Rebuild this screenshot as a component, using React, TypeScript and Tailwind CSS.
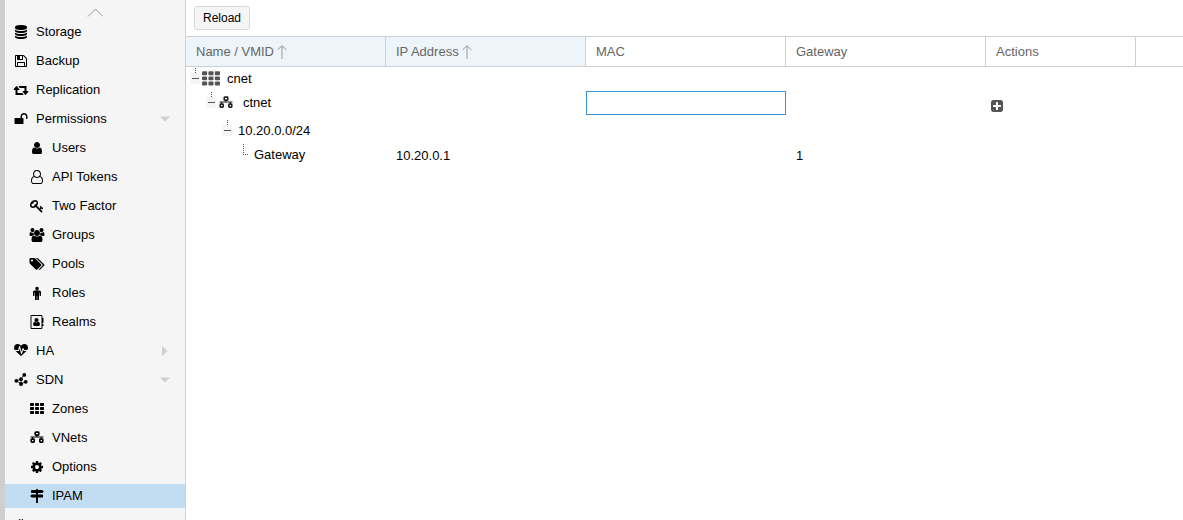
import clsx from 'clsx'

const ICONS = {
  database: {
    box: '0 0 1792 1792',
    d: 'M896 768q237 0 443-43t325-127v170q0 69-103 128t-280 93.5-385 34.5-385-34.5-280-93.5-103-128v-170q119 84 325 127t443 43zm0 768q237 0 443-43t325-127v170q0 69-103 128t-280 93.5-385 34.5-385-34.5-280-93.5-103-128v-170q119 84 325 127t443 43zm0-384q237 0 443-43t325-127v170q0 69-103 128t-280 93.5-385 34.5-385-34.5-280-93.5-103-128v-170q119 84 325 127t443 43zm0-1152q208 0 385 34.5t280 93.5 103 128v128q0 69-103 128t-280 93.5-385 34.5-385-34.5-280-93.5-103-128v-128q0-69 103-128t280-93.5 385-34.5z',
  },
  floppy: {
    box: '0 0 1792 1792',
    d: 'M512 1536h768v-384h-768v384zm896 0h128v-896q0-14-10-38.5t-20-34.5l-281-281q-10-10-34-20t-39-10v416q0 40-28 68t-68 28h-576q-40 0-68-28t-28-68v-416h-128v1280h128v-416q0-40 28-68t68-28h832q40 0 68 28t28 68v416zm-384-928v-320q0-13-9.5-22.5t-22.5-9.5h-192q-13 0-22.5 9.5t-9.5 22.5v320q0 13 9.5 22.5t22.5 9.5h192q13 0 22.5-9.5t9.5-22.5zm640 32v928q0 40-28 68t-68 28h-1344q-40 0-68-28t-28-68v-1344q0-40 28-68t68-28h928q40 0 88 20t76 48l280 280q28 28 48 76t20 88z',
  },
  retweet: {
    box: '64 0 1920 1792',
    d: 'M1344 1504q0 13-9.5 22.5t-22.5 9.5h-960q-8 0-13.5-2t-9-7-5.5-8-3-11.5-1-11.5v-600h-192q-26 0-45-19t-19-45q0-24 15-41l320-384q19-22 49-22t49 22l320 384q15 17 15 41 0 26-19 45t-45 19h-192v384h576q16 0 25 11l160 192q7 10 7 21zm640-416q0 24-15 41l-320 384q-20 23-49 23t-49-23l-320-384q-15-17-15-41 0-26 19-45t45-19h192v-384h-576q-16 0-25-12l-160-192q-7-9-7-20 0-13 9.5-22.5t22.5-9.5h960q8 0 13.5 2t9 7 5.5 8 3 11.5 1 11.5v600h192q26 0 45 19t19 45z',
  },
  unlock: {
    box: '0 0 1792 1792',
    d: 'M1728 576v256q0 26-19 45t-45 19h-64q-26 0-45-19t-19-45v-256q0-106-75-181t-181-75-181 75-75 181v192h96q40 0 68 28t28 68v576q0 40-28 68t-68 28h-960q-40 0-68-28t-28-68v-576q0-40 28-68t68-28h672v-192q0-185 131.5-316.5t316.5-131.5 316.5 131.5 131.5 316.5z',
  },
  user: {
    box: '0 0 1792 1792',
    d: 'M1536 1399q0 109-62.5 187t-150.5 78h-854q-88 0-150.5-78t-62.5-187q0-85 8.5-160.5t31.5-152 58.5-131 94-89 134.5-34.5q131 128 313 128t313-128q76 0 134.5 34.5t94 89 58.5 131 31.5 152 8.5 160.5zm-256-887q0 159-112.5 271.5t-271.5 112.5-271.5-112.5-112.5-271.5 112.5-271.5 271.5-112.5 271.5 112.5 112.5 271.5z',
  },
  userOutline: {
    box: '0 0 1792 1792',
    d: 'M1329 784q47 14 89.5 38t89 73 79.5 115.5 55 172 22 236.5q0 154-100 263.5t-241 109.5h-854q-141 0-241-109.5t-100-263.5q0-131 22-236.5t55-172 79.5-115.5 89-73 89.5-38q-79-125-79-272 0-104 40.5-198.5t109.5-163.5 163.5-109.5 198.5-40.5 198.5 40.5 163.5 109.5 109.5 163.5 40.5 198.5q0 147-79 272zm-433-656q-159 0-271.5 112.5t-112.5 271.5 112.5 271.5 271.5 112.5 271.5-112.5 112.5-271.5-112.5-271.5-271.5-112.5zm427 1536q88 0 150.5-71.5t62.5-173.5q0-239-78.5-377t-225.5-145q-145 127-336 127t-336-127q-147 7-225.5 145t-78.5 377q0 102 62.5 173.5t150.5 71.5h854z',
  },
  key: {
    box: '0 0 1792 1792',
    d: 'M832 512q0-80-56-136t-136-56-136 56-56 136q0 42 19 83-41-19-83-19-80 0-136 56t-56 136 56 136 136 56 136-56 56-136q0-42-19-83 41 19 83 19 80 0 136-56t56-136zm851 704q0 17-49 66t-66 49q-9 0-28.5-16t-36.5-33-38.5-40-24.5-26l-96 96 220 220q28 28 28 68 0 42-39 81t-81 39q-40 0-68-28l-671-671q-176 131-365 131-163 0-265.5-102.5t-102.5-265.5q0-160 95-313t248-248 313-95q163 0 265.5 102.5t102.5 265.5q0 189-131 365l355 355 96-96q-3-3-26-24.5t-40-38.5-33-36.5-16-28.5q0-17 49-66t66-49q13 0 23 10 6 6 46 44.5t82 79.5 86.5 86 73 78 28.5 41z',
  },
  users: {
    box: '-64 0 1920 1792',
    d: 'M529 896q-162 5-265 128h-134q-82 0-138-40.5t-56-118.5q0-353 124-353 6 0 43.5 21t97.5 42.5 119 21.5q67 0 133-23-5 37-5 66 0 139 81 256zm1071 637q0 120-73 189.5t-194 69.5h-874q-121 0-194-69.5t-73-189.5q0-53 3.5-103.5t14-109 26.5-108.5 43-97.5 62-81 85.5-53.5 111.5-20q10 0 43 21.5t73 48 107 48 135 21.5 135-21.5 107-48 73-48 43-21.5q61 0 111.5 20t85.5 53.5 62 81 43 97.5 26.5 108.5 14 109 3.5 103.5zm-1024-1277q0 106-75 181t-181 75-181-75-75-181 75-181 181-75 181 75 75 181zm704 384q0 159-112.5 271.5t-271.5 112.5-271.5-112.5-112.5-271.5 112.5-271.5 271.5-112.5 271.5 112.5 112.5 271.5zm576 225q0 78-56 118.5t-138 40.5h-134q-103-123-265-128 81-117 81-256 0-29-5-66 66 23 133 23 59 0 119-21.5t97.5-42.5 43.5-21q124 0 124 353zm-128-609q0 106-75 181t-181 75-181-75-75-181 75-181 181-75 181 75 75 181z',
  },
  tags: {
    box: '128 0 1920 1792',
    d: 'M576 448q0-53-37.5-90.5t-90.5-37.5-90.5 37.5-37.5 90.5 37.5 90.5 90.5 37.5 90.5-37.5 37.5-90.5zm1067 576q0 53-37 90l-491 492q-39 37-91 37-53 0-90-37l-715-716q-38-37-64.5-101t-26.5-117v-416q0-52 38-90t90-38h416q53 0 117 26.5t102 64.5l715 714q37 39 37 91zm384 0q0 53-37 90l-491 492q-39 37-91 37-36 0-59-14t-53-45l470-470q37-37 37-90 0-52-37-91l-715-714q-38-38-102-64.5t-117-26.5h224q53 0 117 26.5t102 64.5l715 714q37 39 37 91z',
  },
  male: {
    box: '0 0 1792 1792',
    d: 'M1408 768v416q0 40-28 68t-68 28-68-28-28-68v-352h-64v912q0 46-33 79t-79 33-79-33-33-79v-464h-64v464q0 46-33 79t-79 33-79-33-33-79v-912h-64v352q0 40-28 68t-68 28-68-28-28-68v-416q0-80 56-136t136-56h640q80 0 136 56t56 136zm-288-448q0 93-65.5 158.5t-158.5 65.5-158.5-65.5-65.5-158.5 65.5-158.5 158.5-65.5 158.5 65.5 65.5 158.5z',
  },
  addressBook: {
    box: '0 0 1792 1792',
    d: 'M1092 644q0 107-76.5 183t-183.5 76-183.5-76-76.5-183q0-108 76.5-184t183.5-76 183.5 76 76.5 184zm-48 220q46 0 82.5 17t60 47.5 39.5 67 24 81 11.5 82.5 3.5 79q0 67-39.5 118.5t-105.5 51.5h-576q-66 0-105.5-51.5t-39.5-118.5q0-48 4.5-93.5t18.5-98.5 36.5-91.5 63-64.5 93.5-26h5q7 4 32 19.5t35.5 21 33 17 37 16 35 9 39.5 4.5 39.5-4.5 35-9 37-16 33-17 35.5-21 32-19.5zm684-256q0 13-9.5 22.5t-22.5 9.5h-96v128h96q13 0 22.5 9.5t9.5 22.5v192q0 13-9.5 22.5t-22.5 9.5h-96v128h96q13 0 22.5 9.5t9.5 22.5v192q0 13-9.5 22.5t-22.5 9.5h-96v224q0 66-47 113t-113 47h-1216q-66 0-113-47t-47-113v-1472q0-66 47-113t113-47h1216q66 0 113 47t47 113v224h96q13 0 22.5 9.5t9.5 22.5v192q0 13-9.5 22.5t-22.5 9.5h-96v128h96q13 0 22.5 9.5t9.5 22.5v192zm-256 1024v-1472q0-13-9.5-22.5t-22.5-9.5h-1216q-13 0-22.5 9.5t-9.5 22.5v1472q0 13 9.5 22.5t22.5 9.5h1216q13 0 22.5-9.5t9.5-22.5z',
  },
  heartbeat: {
    box: '0 0 1792 1792',
    d: 'M1280 896h305q-5 6-10 10.5t-9 7.5l-3 4-623 600q-18 18-44 18t-44-18l-624-602q-5-2-21-20h369q22 0 39.5-13.5t22.5-34.5l70-281 190 667q6 20 23 33t39 13q21 0 38-13t23-33l146-485 56 112q18 35 57 35zm512-428q0 145-103 300h-369l-111-221q-8-17-25.5-27t-36.5-8q-45 5-56 46l-129 430-196-686q-6-20-23.5-33t-39.5-13-39 13.5-22 34.5l-116 464h-423q-103-155-103-300 0-220 127-344t351-124q62 0 126.5 21.5t120 58 95.5 68.5 76 68q36-36 76-68t95.5-68.5 120-58 126.5-21.5q224 0 351 124t127 344z',
  },
  th: {
    box: '0 0 1792 1792',
    d: 'M96 128h320q96 0 96 96v192q0 96-96 96h-320q-96 0-96-96v-192q0-96 96-96zm640 0h320q96 0 96 96v192q0 96-96 96h-320q-96 0-96-96v-192q0-96 96-96zm640 0h320q96 0 96 96v192q0 96-96 96h-320q-96 0-96-96v-192q0-96 96-96zm-1280 512h320q96 0 96 96v192q0 96-96 96h-320q-96 0-96-96v-192q0-96 96-96zm640 0h320q96 0 96 96v192q0 96-96 96h-320q-96 0-96-96v-192q0-96 96-96zm640 0h320q96 0 96 96v192q0 96-96 96h-320q-96 0-96-96v-192q0-96 96-96zm-1280 512h320q96 0 96 96v192q0 96-96 96h-320q-96 0-96-96v-192q0-96 96-96zm640 0h320q96 0 96 96v192q0 96-96 96h-320q-96 0-96-96v-192q0-96 96-96zm640 0h320q96 0 96 96v192q0 96-96 96h-320q-96 0-96-96v-192q0-96 96-96z',
  },
  cog: {
    box: '0 0 1792 1792',
    d: 'M1152 896q0-106-75-181t-181-75-181 75-75 181 75 181 181 75 181-75 75-181zm512-109v222q0 12-8 23t-20 13l-185 28q-19 54-39 91 35 50 107 138 10 12 10 25t-9 23q-27 37-99 108t-94 71q-12 0-26-9l-138-108q-44 23-91 38-16 136-29 186-7 28-36 28h-222q-14 0-24.5-8.5t-11.5-21.5l-28-184q-49-16-90-37l-141 107q-10 9-25 9-14 0-25-11-126-114-165-168-7-10-7-23 0-12 8-23 15-21 51-66.5t54-70.5q-27-50-41-99l-183-27q-13-2-21-12.5t-8-23.5v-222q0-12 8-23t19-13l186-28q14-46 39-92-40-57-107-138-10-12-10-24 0-10 9-23 26-36 98.5-107.5t94.5-71.5q13 0 26 10l138 107q44-23 91-38 16-136 29-186 7-28 36-28h222q14 0 24.5 8.5t11.5 21.5l28 184q49 16 90 37l142-107q9-9 24-9 13 0 25 10 129 119 165 170 7 8 7 22 0 12-8 23-15 21-51 66.5t-54 70.5q26 50 41 98l183 28q13 2 21 12.5t8 23.5z',
  },
  mapSigns: {
    box: '0 0 1792 1792',
    d: 'M1745 297q10 10 10 23t-10 23l-141 141q-28 28-68 28h-1344q-26 0-45-19t-19-45v-256q0-26 19-45t45-19h576v-64q0-26 19-45t45-19h128q26 0 45 19t19 45v64h512q40 0 68 28zm-977 791h256v640q0 26-19 45t-45 19h-128q-26 0-45-19t-19-45v-640zm832-384q26 0 45 19t19 45v256q0 26-19 45t-45 19h-1344q-40 0-68-28l-141-141q-10-10-10-23t10-23l141-141q28-28 68-28h512v-192h256v192h576z',
  },
  certificate: {
    box: '0 0 1792 1792',
    d: 'M1504 896l138 135q30 28 20 70-12 41-52 51l-188 48 53 186q12 41-19 70-29 31-70 19l-186-53-48 188q-10 40-51 52-12 2-19 2-31 0-51-22l-135-138-135 138q-28 30-70 20-41-11-51-52l-48-188-186 53q-41 12-70-19-31-29-19-70l53-186-188-48q-40-10-52-51-10-42 20-70l138-135-138-135q-30-28-20-70 12-41 52-51l188-48-53-186q-12-41 19-70 29-31 70-19l186 53 48-188q10-41 51-51 41-12 70 19l135 139 135-139q29-30 70-19 41 10 51 51l48 188 186-53q41-12 70 19 31 29 19 70l-53 186 188 48q40 10 52 51 10 42-20 70z',
  },
  plusSquare: {
    box: '0 0 1792 1792',
    d: 'M1408 960v-128q0-26-19-45t-45-19h-320v-320q0-26-19-45t-45-19h-128q-26 0-45 19t-19 45v320h-320q-26 0-45 19t-19 45v128q0 26 19 45t45 19h320v320q0 26 19 45t45 19h128q26 0 45-19t19-45v-320h320q26 0 45-19t19-45zm256-544v960q0 119-84.5 203.5t-203.5 84.5h-960q-119 0-203.5-84.5t-84.5-203.5v-960q0-119 84.5-203.5t203.5-84.5h960q119 0 203.5 84.5t84.5 203.5z',
  },
}

type IconName = keyof typeof ICONS | 'network' | 'sdn'

function Icon({ name, className = 'h-3.5 w-4' }: { name: IconName; className?: string }) {
  if (name === 'network') {
    return (
      <svg viewBox="0 0 14 14" className={clsx('shrink-0', className)} fill="none" stroke="currentColor" aria-hidden="true">
        <rect x="5.2" y="1.1" width="3.6" height="3" rx="0.6" strokeWidth="1.6" />
        <rect x="1.2" y="8.1" width="3" height="3" rx="0.6" strokeWidth="1.6" />
        <rect x="9.8" y="8.1" width="3" height="3" rx="0.6" strokeWidth="1.6" />
        <path d="M7 4v2.500M0.500 6h13M2.700 6v2M11.300 6v2" strokeWidth="1.1" />
      </svg>
    )
  }
  if (name === 'sdn') {
    return (
      <svg viewBox="0 0 14 14" className={clsx('shrink-0', className)} fill="currentColor" stroke="currentColor" aria-hidden="true">
        <path d="M2.300 7.800L7 10.800L11.700 8.800M2.300 7.800L7 6.200L10.300 1.800M7 6.200v4.600" fill="none" strokeWidth="0.8" />
        <g stroke="none">
          <circle cx="2.3" cy="7.8" r="1.9" />
          <circle cx="10.3" cy="1.9" r="1.9" />
          <circle cx="7" cy="6.2" r="1.9" />
          <circle cx="7" cy="10.9" r="2" />
          <circle cx="11.7" cy="8.8" r="1.9" />
        </g>
      </svg>
    )
  }
  const icon = ICONS[name]
  return (
    <svg viewBox={icon.box} className={clsx('shrink-0', className)} fill="currentColor" aria-hidden="true">
      <path d={icon.d} />
    </svg>
  )
}

type NavItem = {
  label: string
  icon: IconName
  child?: boolean
  state?: 'open' | 'closed'
  selected?: boolean
}

const NAV: NavItem[] = [
  { label: 'Storage', icon: 'database' },
  { label: 'Backup', icon: 'floppy' },
  { label: 'Replication', icon: 'retweet' },
  { label: 'Permissions', icon: 'unlock', state: 'open' },
  { label: 'Users', icon: 'user', child: true },
  { label: 'API Tokens', icon: 'userOutline', child: true },
  { label: 'Two Factor', icon: 'key', child: true },
  { label: 'Groups', icon: 'users', child: true },
  { label: 'Pools', icon: 'tags', child: true },
  { label: 'Roles', icon: 'male', child: true },
  { label: 'Realms', icon: 'addressBook', child: true },
  { label: 'HA', icon: 'heartbeat', state: 'closed' },
  { label: 'SDN', icon: 'sdn', state: 'open' },
  { label: 'Zones', icon: 'th', child: true },
  { label: 'VNets', icon: 'network', child: true },
  { label: 'Options', icon: 'cog', child: true },
  { label: 'IPAM', icon: 'mapSigns', child: true, selected: true },
  { label: '', icon: 'certificate' },
]

function Sidebar() {
  return (
    <nav className="flex w-[186px] shrink-0 flex-col overflow-hidden border-r border-l-5 border-[#cfcfcf] bg-[#f5f5f5]">
      <button type="button" aria-label="Scroll up" className="flex h-5 shrink-0 items-center justify-center pt-1">
        <svg viewBox="0 0 16 9" className="h-[9px] w-4" fill="none" stroke="#999" aria-hidden="true">
          <path d="M1 8.500L8.500 1L16 8.500" />
        </svg>
      </button>
      <ul className="flex flex-col gap-[5px]">
        {NAV.map((item) => (
          <li key={item.icon}>
            <a
              href="#"
              className={clsx(
                'flex h-6 items-center gap-[7px] pr-[15px]',
                item.child ? 'pl-6' : 'pl-2',
                item.selected && 'bg-[#c2ddf2]',
              )}
            >
              <Icon name={item.icon} />
              <span className="flex-1">{item.label}</span>
              {item.state && (
                <svg viewBox="0 0 10 10" className="size-2.5" fill="#cfcfcf" aria-hidden="true">
                  <path d={item.state === 'open' ? 'M0 2.500h10l-5 5z' : 'M2 0v10l5.500-5z'} />
                </svg>
              )}
            </a>
          </li>
        ))}
      </ul>
    </nav>
  )
}

const COLUMNS = [
  { label: 'Name / VMID', sorted: true },
  { label: 'IP Address', sorted: true },
  { label: 'MAC' },
  { label: 'Gateway' },
  { label: 'Actions' },
]

type Row = {
  name: string
  indent: string
  icon?: IconName
  leaf?: boolean
  ip?: string
  gateway?: string
  focused?: boolean
}

const ROWS: Row[] = [
  { name: 'cnet', indent: 'pl-px', icon: 'th' },
  { name: 'ctnet', indent: 'pl-[17px]', icon: 'network', focused: true },
  { name: '10.20.0.0/24', indent: 'pl-[33px]' },
  { name: 'Gateway', indent: 'pl-[49px]', leaf: true, ip: '10.20.0.1', gateway: '1' },
]

function Elbow({ leaf }: { leaf?: boolean }) {
  return (
    <svg viewBox="0 0 16 24" className="h-6 w-4 shrink-0" fill="none" stroke="#555" shapeRendering="crispEdges" aria-hidden="true">
      {leaf ? (
        <path d="M8.500 1v11M8 11.500h6" strokeDasharray="1 1" />
      ) : (
        <>
          <path d="M8.500 1v5" strokeDasharray="1 1" />
          <rect x="3" y="6" width="10" height="11" fill="#f5f5f5" stroke="none" />
          <path d="M5 11.500h7" />
        </>
      )}
    </svg>
  )
}

function TreeGrid() {
  return (
    <table className="w-full table-fixed border-separate border-spacing-0">
      <colgroup>
        <col className="w-[200px]" />
        <col className="w-[200px]" />
        <col className="w-[200px]" />
        <col className="w-[200px]" />
        <col className="w-[150px]" />
        <col />
      </colgroup>
      <thead>
        <tr>
          {COLUMNS.map((col) => (
            <th
              key={col.label}
              className={clsx(
                'h-[31px] border-y border-r border-[#cfcfcf] px-2.5 py-0 text-left font-normal text-[#666]',
                col.sorted && 'bg-[#edf5fb]',
              )}
            >
              <span className="flex items-center gap-[3px]">
                {col.label}
                {col.sorted && (
                  <svg viewBox="0 0 10 14" className="h-3.5 w-2.5" fill="none" stroke="#999" aria-hidden="true">
                    <path d="M0.500 5L5 0.700L9.500 5M5 1v13" />
                  </svg>
                )}
              </span>
            </th>
          ))}
          <th aria-label="Spare" className="border-y border-[#cfcfcf] p-0" />
        </tr>
      </thead>
      <tbody>
        {ROWS.map((row) => (
          <tr key={row.name} className={row.focused ? 'h-7' : 'h-6'}>
            <td className="p-0 align-top">
              <div className={clsx('flex h-6 items-center', row.indent)}>
                <Elbow leaf={row.leaf} />
                {row.icon && (
                  <span className="flex w-[21px]">
                    {row.icon === 'th' ? (
                      <Icon name="th" className="-ml-px size-[18px] text-[#555]" />
                    ) : (
                      <Icon name={row.icon} className="size-3.5 text-[#222]" />
                    )}
                  </span>
                )}
                <span className="pl-[3px]">{row.name}</span>
              </div>
            </td>
            <td className="px-2.5 pt-0.5 pb-0">{row.ip}</td>
            <td className="p-0 align-top">
              {row.focused && <div tabIndex={0} className="h-6 border border-[#3892d4]" />}
            </td>
            <td className="px-2.5 pt-0.5 pb-0">{row.gateway}</td>
            <td className="px-1 pt-0.5 pb-0">
              {row.focused && (
                <button type="button" aria-label="Add" className="block text-[#555]">
                  <Icon name="plusSquare" className="size-3.5" />
                </button>
              )}
            </td>
            <td className="p-0" />
          </tr>
        ))}
      </tbody>
    </table>
  )
}

export default function App() {
  return (
    <div className="flex h-screen overflow-hidden bg-white font-['Liberation_Sans',Arial,sans-serif] text-[13px] leading-5 text-black">
      <Sidebar />
      <main className="min-w-0 flex-1">
        <div className="flex h-9 items-center px-2">
          <button type="button" className="h-6 rounded-[3px] border border-[#d8d8d8] bg-[#f5f5f5] px-2 text-[12px]">
            Reload
          </button>
        </div>
        <TreeGrid />
      </main>
    </div>
  )
}
